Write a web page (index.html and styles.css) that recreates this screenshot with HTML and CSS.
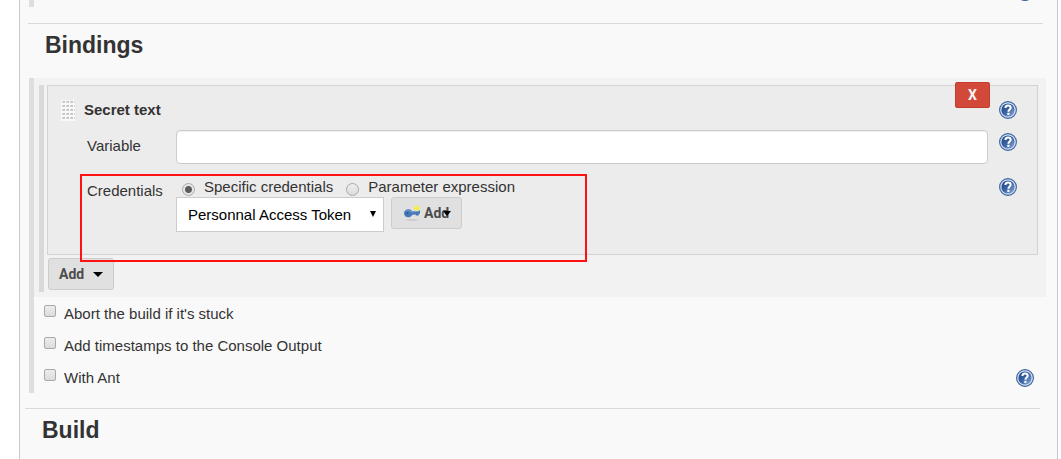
FILE: index.html
```html
<!DOCTYPE html>
<html lang="en">

<head>
  <meta charset="UTF-8" />
  <meta name="viewport" content="width=device-width, initial-scale=1.0" />
  <title>Job configuration</title>
  <link rel="stylesheet" href="styles.css">
</head>

<body>
  <svg width="0" height="0" class="sprites" aria-hidden="true">
    <defs>
      <linearGradient id="helpFill" x1="0" y1="0" x2="1" y2="1">
        <stop offset="0" stop-color="#1c4286" />
        <stop offset="0.5" stop-color="#3c64a4" />
        <stop offset="1" stop-color="#8fb0dc" />
      </linearGradient>
      <symbol id="help" viewBox="0 0 18 18">
        <circle cx="9" cy="9" r="8.4" fill="#d3e0f0" stroke="#3a619c" stroke-width="1.1" />
        <circle cx="9" cy="9" r="6.6" fill="url(#helpFill)" />
        <path d="M6.400 6.900C6.400 5.200 7.500 4.400 9 4.400s2.700.8 2.700 2.300c0 1.700-2.300 1.800-2.300 4" fill="none" stroke="#fff" stroke-width="2" />
        <rect x="8.300" y="11.800" width="2.200" height="2.100" fill="#fff" />
      </symbol>
    </defs>
  </svg>

  <main class="panel">
    <div class="section-list previous">
      <a class="help" href="#" aria-label="Help"><svg><use href="#help" /></svg></a>
    </div>

    <hr class="rule" />
    <h2>Bindings</h2>

    <div class="section-list">
      <div class="nested">
        <div class="repeatable">
          <section class="binding">
            <button type="button" class="delete">X</button>
            <div class="binding-title">
              <svg class="handle" viewBox="0 0 14 21" aria-hidden="true">
                <defs>
                  <pattern id="grip" width="4" height="4" patternUnits="userSpaceOnUse">
                    <rect x="1" y="1" width="3" height="1" fill="#dcdcdc" />
                    <rect x="1" y="2" width="3" height="1" fill="#d2d2d2" />
                    <rect x="2" y="1" width="2" height="1" fill="#bcbcbc" />
                  </pattern>
                </defs>
                <rect width="14" height="21" fill="#f9f9f9" />
                <rect width="14" height="20" fill="url(#grip)" />
              </svg>
              <b>Secret text</b>
              <a class="help" href="#" aria-label="Help for Secret text"><svg><use href="#help" /></svg></a>
            </div>

            <div class="field">
              <label for="variable">Variable</label>
              <input type="text" id="variable" class="textbox" />
              <a class="help" href="#" aria-label="Help for Variable"><svg><use href="#help" /></svg></a>
            </div>

            <div class="field credentials">
              <label for="credentials">Credentials</label>
              <div class="setting">
                <div class="radios">
                  <input type="radio" name="source" id="specific" checked />
                  <label for="specific">Specific credentials</label>
                  <input type="radio" name="source" id="expression" />
                  <label for="expression">Parameter expression</label>
                </div>
                <div class="picker">
                  <div class="select">
                    <select id="credentials">
                      <option>Personnal Access Token</option>
                    </select>
                  </div>
                  <button type="button" class="btn btn-key">
                    <svg class="key" viewBox="0 0 16 16" aria-hidden="true">
                      <ellipse cx="8" cy="15" rx="6" ry="1" fill="#cccccc" />
                      <path d="M4.300 4.200c1.700 0 3.100.8 3.800 2.100l7.900-.7v3.200h-1.200v1.600h-3v-1l-3.500.3c-.7 1.500-2.200 2.600-4 2.600C1.900 12.300 0 10.500 0 8.200s1.900-4 4.300-4z" fill="#4577b8" />
                      <path d="M2 6.200c1.300-1.200 3.700-1 4.800.8l8.200-.6" fill="none" stroke="#7ba3d6" stroke-width="1" />
                      <circle cx="3.300" cy="8.300" r="1" fill="#2b5796" />
                      <circle cx="12.700" cy="3.200" r="2.800" fill="#f3ec5a" />
                    </svg>
                    Add
                    <span class="caret"></span>
                  </button>
                </div>
              </div>
              <a class="help" href="#" aria-label="Help for Credentials"><svg><use href="#help" /></svg></a>
              <div class="highlight"></div>
            </div>
          </section>
          <button type="button" class="btn">Add <span class="caret"></span></button>
        </div>
      </div>

      <div class="option">
        <input type="checkbox" id="abort" />
        <label for="abort">Abort the build if it's stuck</label>
      </div>
      <div class="option">
        <input type="checkbox" id="timestamps" />
        <label for="timestamps">Add timestamps to the Console Output</label>
      </div>
      <div class="option">
        <input type="checkbox" id="ant" />
        <label for="ant">With Ant</label>
        <a class="help" href="#" aria-label="Help for With Ant"><svg><use href="#help" /></svg></a>
      </div>
    </div>

    <hr class="rule rule-build" />
    <h2 class="build">Build</h2>
  </main>
</body>

</html>
```

FILE: styles.css
```css
* {
  box-sizing: border-box;
}

body {
  margin: 0;
  background: #fff;
  color: #333;
  font: 15px/20px "Liberation Sans", Arial, sans-serif;
  overflow: hidden;
}

.sprites {
  position: absolute;
}

.panel {
  min-height: 100vh;
  margin: 0 3px 0 19px;
  border: solid #c8c8c8;
  border-width: 0 1px;
  background: #f9f9f9;
}

h2 {
  margin: 0;
  padding: 7px 25px 19px;
  font-size: 23px;
  line-height: 28px;
}

h2.build {
  padding-left: 22px;
}

.rule {
  height: 1px;
  margin: 0 14px 0 8px;
  border: 0;
  background: #d9d9d9;
}

.rule-build {
  margin: 15px 17px 0 5px;
}

.section-list {
  margin: 0 11px 0 9px;
  border-left: 5px solid #dedede;
}

.previous {
  display: flex;
  height: 7px;
  margin-bottom: 16px;
  padding-right: 12px;
}

.previous .help {
  margin-top: -17px;
}

.help {
  flex: none;
  width: 18px;
  height: 18px;
  margin-left: auto;
}

.help svg {
  display: block;
  width: 18px;
  height: 18px;
}

.nested {
  margin-bottom: 1px;
  padding: 7px 8px 5px 5px;
  background: #f2f2f2;
}

.repeatable {
  padding: 0 0 2px 3px;
  border-left: 5px solid #d9d9d9;
}

.binding {
  position: relative;
  margin-bottom: 3px;
  padding: 12px 20px 22px 13px;
  border: 1px solid #d3d3d3;
  background: #ececec;
}

.delete {
  position: absolute;
  top: -4px;
  right: 47px;
  width: 35px;
  height: 26px;
  padding: 0;
  border: 1px solid #c23b2e;
  border-radius: 2px;
  background: #d24939;
  color: #f4f4f4;
  font: bold 14px/24px Roboto, Arial, sans-serif;
}

.binding-title {
  display: flex;
  align-items: center;
  gap: 9px;
  height: 24px;
  margin-bottom: 8px;
}

.handle {
  width: 14px;
  height: 21px;
}

.field {
  display: flex;
  align-items: flex-start;
  position: relative;
  padding-left: 26px;
}

.field > label {
  flex: none;
  width: 89px;
  line-height: 32px;
}

.field > .help {
  margin: 3px 0 0 11px;
}

.textbox {
  flex: 1;
  min-width: 0;
  height: 34px;
  padding: 6px 12px;
  border: 1px solid #ccc;
  border-radius: 4px;
  background: #fff;
  box-shadow: inset 0 1px 1px rgba(0, 0, 0, 0.075);
  font: inherit;
}

.credentials {
  margin-top: 11px;
}

.setting {
  flex: 1;
}

.radios {
  display: flex;
  align-items: center;
  height: 22px;
  padding: 2px 0 0 6px;
}

.radios label {
  margin: 0 13px 0 9px;
}

input[type=radio],
input[type=checkbox] {
  flex: none;
  appearance: none;
  width: 13px;
  height: 13px;
  margin: 0;
  border: 1px solid #a9a9a9;
  border-radius: 50%;
  background: linear-gradient(#ededed, #dcdcdc);
}

input[type=radio] {
  margin-top: 4px;
}

input[type=radio]:checked {
  background: radial-gradient(circle, #5c5c5c 3px, #e6e6e6 4px);
}

input[type=checkbox] {
  width: 12px;
  height: 12px;
  border-radius: 2px;
}

.picker {
  display: flex;
  align-items: flex-start;
  gap: 7px;
}

.select {
  position: relative;
  width: 208px;
}

.select::after {
  content: "";
  position: absolute;
  top: 14px;
  right: 8px;
  border: solid transparent;
  border-width: 6px 3px 0;
  border-top-color: #000;
  pointer-events: none;
}

select {
  display: block;
  appearance: none;
  width: 100%;
  height: 35px;
  padding: 0 11px;
  border: 1px solid #ccc;
  border-radius: 0;
  background: #fff;
  color: #000;
  font: inherit;
}

.btn {
  display: flex;
  align-items: center;
  gap: 9px;
  height: 32px;
  margin-left: 1px;
  padding: 0 10px;
  border: 1px solid #ccc;
  border-radius: 3px;
  background: #e0e0e0;
  color: #4d4d4d;
  font: bold 14px/20px Roboto, Arial, sans-serif;
}

.caret {
  border: solid transparent;
  border-width: 5px 5px 0;
  border-top-color: #000;
}

.btn-key {
  position: relative;
  gap: 4px;
  margin-left: 0;
  padding: 0 12px;
}

.key {
  width: 16px;
  height: 16px;
}

/* the menu arrow sits on top of the last letter */
.btn-key .caret {
  position: absolute;
  top: 13px;
  right: 10px;
  border-width: 5px 4px 0;
}

.highlight {
  position: absolute;
  top: -1px;
  left: 19px;
  width: 507px;
  height: 88px;
  border: 2px solid #f11;
  pointer-events: none;
}

.option {
  display: flex;
  align-items: center;
  height: 32px;
  padding: 0 12px 0 10px;
}

.option:last-child {
  height: 31px;
}

.option input {
  margin: 0 8px 6px 0;
}
```
